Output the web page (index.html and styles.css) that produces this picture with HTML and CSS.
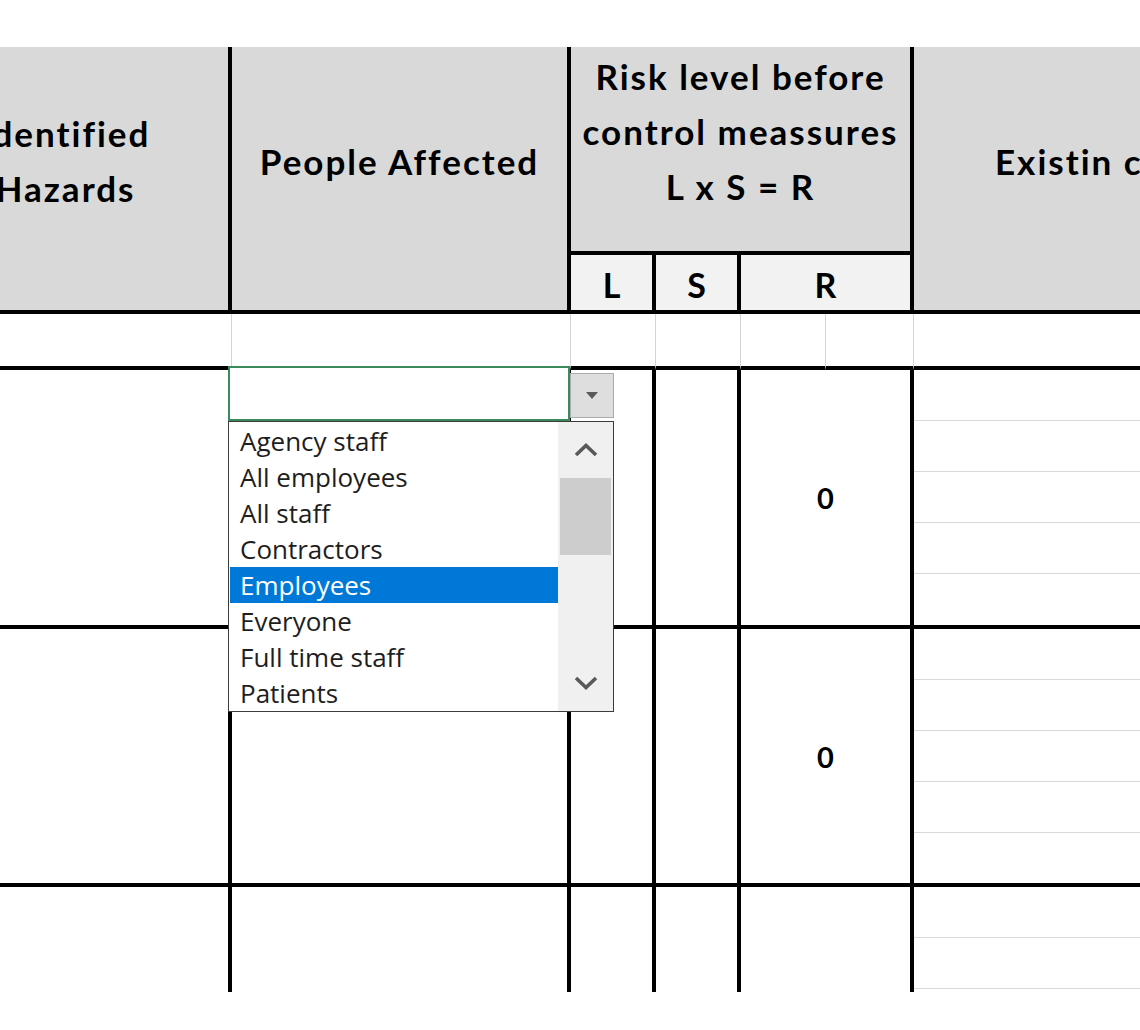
FILE: index.html
```html
<!DOCTYPE html>
<html lang="en">
<head>
<meta charset="utf-8">
<title>Risk assessment</title>
<link rel="stylesheet" href="styles.css">
</head>
<body>
<div class="sheet">
  <div class="hd hd-a">Identified<br>Hazards</div>
  <div class="hd hd-b">People Affected</div>
  <div class="hd hd-risk">Risk level before<br>control meassures<br>L x S = R</div>
  <div class="hd hd-e">Existin controls</div>
  <div class="sub sub-l">L</div>
  <div class="sub sub-s">S</div>
  <div class="sub sub-r">R</div>

  <div class="thin"></div>
  <div class="thin"></div>
  <div class="thin"></div>
  <div class="thin"></div>
  <div class="thin"></div>
  <div class="thin"></div>
  <div class="thin thin-last"></div>

  <div class="cell col-a"></div>
  <div class="cell col-b host">
    <div class="selection"></div>
    <div class="dd-btn"><span class="tri"></span></div>
    <div class="dd-list">
      <ul class="opts">
        <li>Agency staff</li>
        <li>All employees</li>
        <li>All staff</li>
        <li>Contractors</li>
        <li class="on">Employees</li>
        <li>Everyone</li>
        <li>Full time staff</li>
        <li>Patients</li>
      </ul>
      <div class="sbar">
        <div class="sb-btn"><svg width="26" height="16" viewBox="0 0 26 16"><path d="M3 13 L13 3.5 L23 13" fill="none" stroke="#595959" stroke-width="3.6"/></svg></div>
        <div class="sb-thumb"></div>
        <div class="sb-space"></div>
        <div class="sb-btn"><svg width="26" height="16" viewBox="0 0 26 16"><path d="M3 3 L13 12.5 L23 3" fill="none" stroke="#595959" stroke-width="3.6"/></svg></div>
      </div>
    </div>
  </div>
  <div class="cell col-l"></div>
  <div class="cell col-s"></div>
  <div class="cell col-r">0</div>
  <div class="cell col-e"><i></i><i></i><i></i><i></i><i></i></div>

  <div class="cell col-a"></div>
  <div class="cell col-b"></div>
  <div class="cell col-l"></div>
  <div class="cell col-s"></div>
  <div class="cell col-r">0</div>
  <div class="cell col-e"><i></i><i></i><i></i><i></i><i></i></div>

  <div class="cell last col-a"></div>
  <div class="cell last col-b"></div>
  <div class="cell last col-l"></div>
  <div class="cell last col-s"></div>
  <div class="cell last col-r"></div>
  <div class="cell last col-e"><i></i><i></i><i></i></div>
</div>
</body>
</html>
```

FILE: styles.css
```css
html, body {
  margin: 0;
  padding: 0;
  background: #ffffff;
  overflow: hidden;
  width: 1140px;
  height: 1030px;
}

.sheet {
  display: grid;
  grid-template-columns: 332px 339px 85px 85px 85px 88px 402px;
  grid-template-rows: 208px 59px 56px 259px 258px 105px;
  margin-top: 47px;
  margin-left: -100px;
  width: 1416px;
  font-family: Lato, "Liberation Sans", sans-serif;
  color: #000;
}

.sheet > div {
  box-sizing: border-box;
}

/* header */
.hd {
  background: #d9d9d9;
  font-weight: 700;
  font-size: 35px;
  letter-spacing: 2px;
  line-height: 55px;
  text-align: center;
  display: flex;
  align-items: center;
  justify-content: center;
  padding-bottom: 35px;
  border-bottom: 4px solid #000;
  white-space: nowrap;
}
.hd-a { grid-column: 1; grid-row: 1 / 3; border-right: 4px solid #000; padding-left: 3px; }
.hd-b { grid-column: 2; grid-row: 1 / 3; border-right: 4px solid #000; }
.hd-risk { grid-column: 3 / 7; grid-row: 1; border-right: 4px solid #000; }
.hd-e {
  grid-column: 7; grid-row: 1 / 3;
  justify-content: flex-start;
  padding-left: 81px;
  overflow: hidden;
}

.sub {
  background: #f2f2f2;
  font-weight: 700;
  font-size: 34px;
  display: flex;
  align-items: center;
  justify-content: center;
  padding-top: 4px;
  border-right: 4px solid #000;
  border-bottom: 4px solid #000;
}
.sub-l { grid-column: 3; grid-row: 2; }
.sub-s { grid-column: 4; grid-row: 2; }
.sub-r { grid-column: 5 / 7; grid-row: 2; }

/* thin spacer row */
.thin {
  grid-row: 3;
  border-right: 1px solid #d4d4d4;
  border-bottom: 4px solid #000;
}
.thin-last { border-right: none; }

/* data rows */
.cell {
  border-right: 4px solid #000;
  border-bottom: 4px solid #000;
}
.cell.last { border-bottom: none; }
.col-a { grid-column: 1; }
.col-b { grid-column: 2; }
.col-l { grid-column: 3; }
.col-s { grid-column: 4; }
.col-r {
  grid-column: 5 / 7;
  display: flex;
  align-items: center;
  justify-content: center;
  font-weight: 700;
  font-size: 29px;
}
.col-e {
  grid-column: 7;
  border-right: none;
  display: flex;
  flex-direction: column;
}
.col-e i {
  display: block;
  height: 51px;
  flex: none;
  box-sizing: border-box;
  border-bottom: 1px solid #d9d9d9;
}
.cell:not(.last).col-e i:last-child { border-bottom: none; flex: 1; }

/* dropdown */
.host { position: relative; }

.selection {
  position: absolute;
  left: -4px;
  top: -4px;
  width: 342px;
  height: 55px;
  box-sizing: border-box;
  border: 2px solid #3a8a5c;
  background: #fff;
  z-index: 2;
}

.dd-btn {
  position: absolute;
  left: 338px;
  top: 3px;
  width: 44px;
  height: 45px;
  box-sizing: border-box;
  background: #dedede;
  border: 1px solid #ababab;
  display: flex;
  align-items: center;
  justify-content: center;
  z-index: 3;
}
.tri {
  width: 0;
  height: 0;
  border-left: 6px solid transparent;
  border-right: 6px solid transparent;
  border-top: 7px solid #5a5a5a;
}

.dd-list {
  position: absolute;
  left: -4px;
  top: 51px;
  width: 386px;
  height: 291px;
  box-sizing: border-box;
  border: 1px solid #3c3c3c;
  background: #fff;
  display: flex;
  z-index: 4;
}

.opts {
  list-style: none;
  margin: 0;
  padding: 1px 0 0 1px;
  width: 328px;
  flex: none;
  font-family: "Open Sans", "Noto Sans", sans-serif;
  font-size: 26px;
  color: #1e1e1e;
}
.opts li {
  height: 36px;
  line-height: 36px;
  padding-left: 10px;
  white-space: nowrap;
}
.opts li.on {
  background: #0078d7;
  color: #fff;
}

.sbar {
  flex: 1;
  background: #f0f0f0;
  display: flex;
  flex-direction: column;
}
.sb-btn {
  height: 56px;
  flex: none;
  display: flex;
  align-items: center;
  justify-content: center;
}
.sb-thumb {
  height: 77px;
  flex: none;
  margin: 0 2px;
  background: #cdcdcd;
}
.sb-space { flex: 1; }
```
